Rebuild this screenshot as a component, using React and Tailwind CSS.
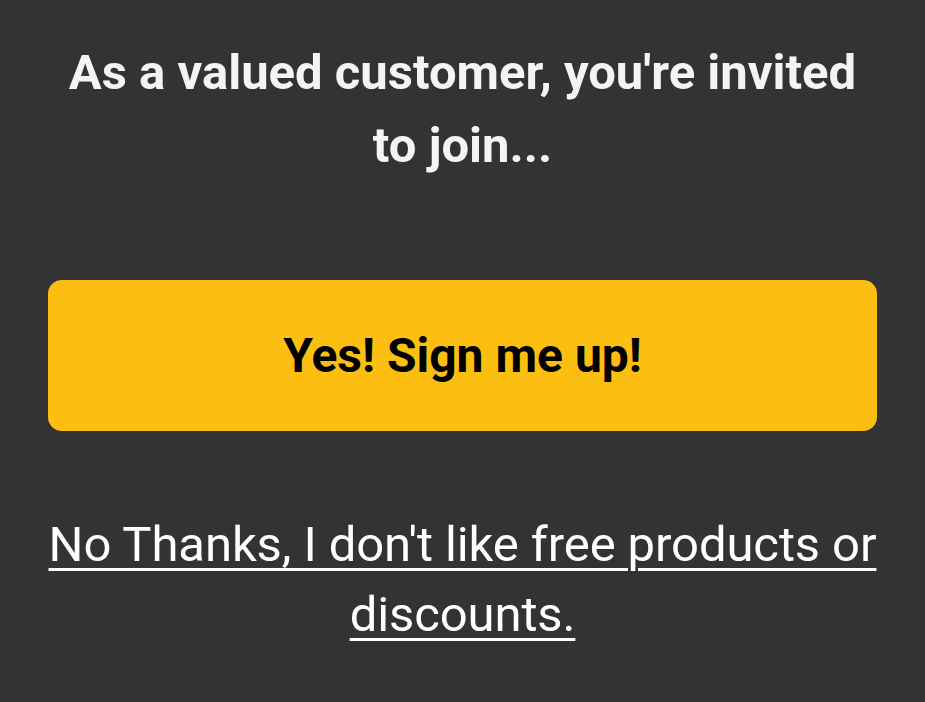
export default function App() {
  return (
    <div
      className="min-h-screen w-full bg-[#333335] px-12 pt-9 text-center"
      style={{ fontFamily: "Roboto, 'Liberation Sans', sans-serif" }}
    >
      <h1 className="mx-auto text-[49px] font-bold leading-[73px] text-[#f4f4f4]">
        As a valued customer, you're invited
        <br />
        to join...
      </h1>

      <button className="mt-[98px] flex h-[151px] w-full items-center justify-center rounded-[14px] bg-[#fdbe12] text-[48px] font-bold text-black">
        Yes! Sign me up!
      </button>

      <a
        href="#"
        className="-mx-12 mt-[79px] block whitespace-nowrap text-[49px] leading-[70px] tracking-[-0.1px] text-white underline decoration-[3px] underline-offset-[7px]"
      >
        No Thanks, I don't like free products or
        <br />
        discounts.
      </a>
    </div>
  );
}
